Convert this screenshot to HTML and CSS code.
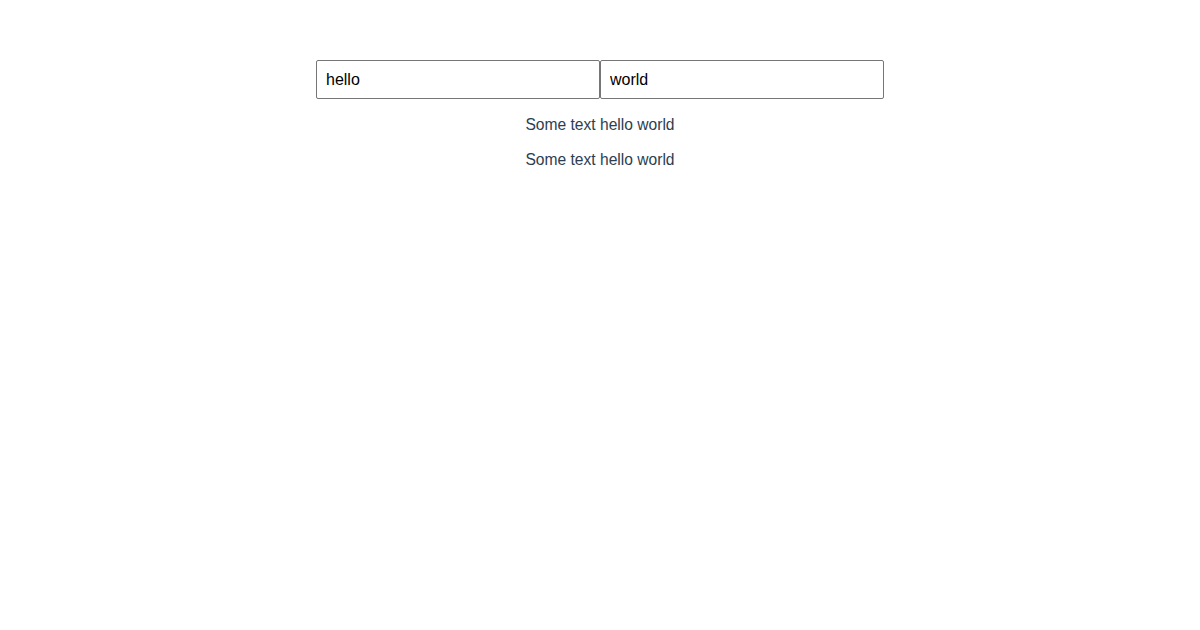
FILE: index.html
```html
<!DOCTYPE html>
<html>
<head>
<meta charset="utf-8">
<link rel="stylesheet" href="styles.css">
</head>
<body>
<div class="app">
  <div class="inputs">
    <input class="field" type="text" value="hello">
    <input class="field" type="text" value="world">
  </div>
  <p class="line">Some text hello world</p>
  <p class="line">Some text hello world</p>
</div>
</body>
</html>
```
FILE: styles.css
```css
html, body {
  margin: 0;
  padding: 0;
  background: #ffffff;
}
.app {
  font-family: "Liberation Sans", Arial, sans-serif;
  color: #2c3e50;
  text-align: center;
  padding-top: 60px;
  font-size: 16px;
}
.inputs {
  display: flex;
  justify-content: center;
}
.field {
  box-sizing: border-box;
  width: 284px;
  height: 39px;
  margin: 0;
  padding: 0 9px;
  border: 1px solid #767676;
  border-radius: 2px;
  font-family: "Liberation Sans", Arial, sans-serif;
  font-size: 16px;
  color: #000000;
  background: #ffffff;
  outline: none;
}
.line {
  margin: 16px 0;
  font-size: 15.6px;
  line-height: 19px;
}
```
